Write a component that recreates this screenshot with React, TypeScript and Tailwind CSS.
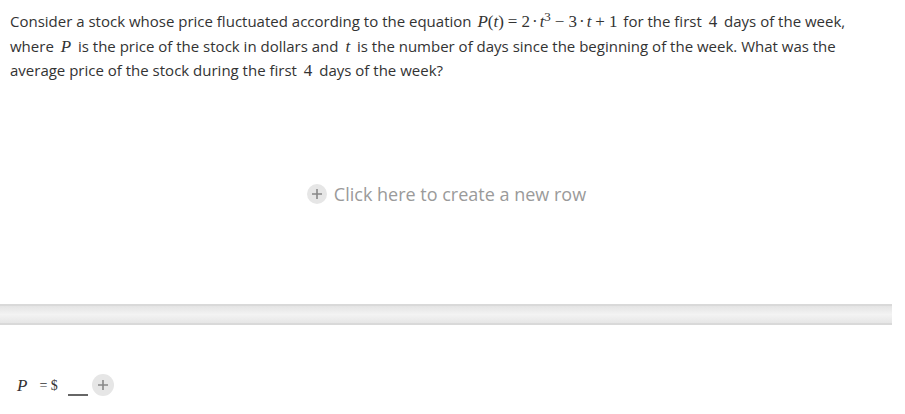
import React from 'react'

const serif = { fontFamily: '"Liberation Serif", "DejaVu Serif", serif' }

function M({ children }: { children: React.ReactNode }) {
  return <span className="italic text-[17px] leading-none mx-[3px]" style={serif}>{children}</span>
}
function N({ children }: { children: React.ReactNode }) {
  return <span className="text-[17px] leading-none mx-[3px]" style={serif}>{children}</span>
}

function PlusCircle({ size = 20 }: { size?: number }) {
  return (
    <span
      className="inline-flex items-center justify-center rounded-full bg-[#e6e6e6] text-[#888]"
      style={{ width: size, height: size }}
    >
      <svg width="12" height="12" viewBox="0 0 12 12" fill="none" stroke="currentColor" strokeWidth="1.6">
        <path d="M6 1v10M1 6h10" />
      </svg>
    </span>
  )
}

export default function App() {
  return (
    <div className="w-[905px] h-[414px] bg-white overflow-hidden text-[#333]" style={{ fontFamily: '"Open Sans", sans-serif' }}>
      <div className="pl-[10px] pr-[10px] pt-[9px] text-[15px] leading-[24.5px] w-[870px]">
        Consider a stock whose price fluctuated according to the equation{' '}
        <span className="text-[17px] leading-none mx-[2px] whitespace-nowrap" style={serif}>
          <i>P</i>(<i>t</i>)<span className="mx-[4px]">=</span>2<span className="mx-[2px]">·</span><i>t</i>
          <sup className="text-[13px]">3</sup>
          <span className="mx-[4px]">−</span>3<span className="mx-[2px]">·</span><i>t</i>
          <span className="mx-[4px]">+</span>1
        </span>{' '}
        for the first <N>4</N> days of the week, where <M>P</M> is the price of the stock in dollars and <M>t</M> is the
        number of days since the beginning of the week. What was the average price of the stock during the first{' '}
        <N>4</N> days of the week?
      </div>

      <div className="h-[98px]" />

      <div className="flex items-center justify-center gap-[7px] text-[18px] text-[#9a9a9a] pr-[12px]">
        <PlusCircle />
        <span>Click here to create a new row</span>
      </div>

      <div className="h-[96px]" />

      <div className="w-[892px] h-[21px] border-y-2 border-[#d9d9d9] bg-gradient-to-b from-[#e4e4e4] via-[#f3f3f3] to-[#e6e6e6]" />

      <div className="flex items-center pl-[17px] pt-[48px] text-[13px]">
        <span className="italic text-[17px]" style={serif}>P</span>
        <span className="ml-[12px] text-[14px]" style={serif}>= $</span>
        <span className="ml-[10px] w-[20px] mt-[20px] border-b-2 border-[#666]" />
        <span className="ml-[4px]"><PlusCircle size={22} /></span>
      </div>
    </div>
  )
}
